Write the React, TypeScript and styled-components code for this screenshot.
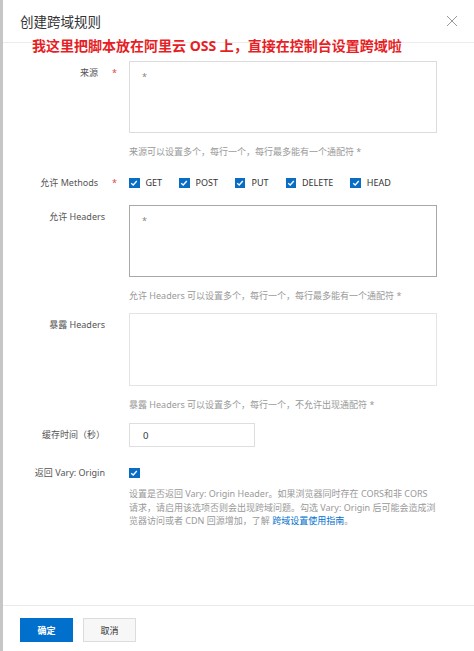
import React from "react";
import styled, { createGlobalStyle } from "styled-components";

const Global = createGlobalStyle`
  html, body { margin: 0; padding: 0; background: #fff; }
  body { font-family: "Noto Sans", "Noto Sans CJK SC", sans-serif; }
  * { box-sizing: border-box; }
`;

const Dialog = styled.div`
  position: relative;
  width: 474px;
  height: 651px;
  border-left: 3px solid #c6c6c6;
  display: flex;
  flex-direction: column;
  background: #fff;
  overflow: hidden;
`;

const Header = styled.div`
  height: 43px;
  flex: none;
  border-bottom: 1px solid #ececec;
  display: flex;
  align-items: flex-start;
  justify-content: space-between;
  padding: 12px 16px 0 17px;
`;

const Title = styled.div`
  font-size: 13.5px;
  line-height: 20px;
  color: #333;
`;

const Close = styled.button`
  border: none;
  background: none;
  padding: 0;
  margin-top: 3px;
  width: 12px;
  height: 12px;
  display: flex;
  cursor: pointer;
`;

const Annotation = styled.div`
  position: absolute;
  left: 29px;
  top: 36px;
  font-size: 14px;
  line-height: 20px;
  font-weight: 700;
  color: #e61e25;
  white-space: nowrap;
`;

const Body = styled.div`
  flex: 1;
  padding-top: 18px;
`;

const Item = styled.div<{ $mt?: number }>`
  display: grid;
  grid-template-columns: 126px 308px;
  margin-top: ${(p) => p.$mt ?? 0}px;
`;

const Label = styled.div<{ $lh?: number; $required?: boolean }>`
  position: relative;
  text-align: right;
  padding-right: ${(p) => (p.$required ? 31 : 24)}px;
  font-size: 9px;
  line-height: ${(p) => p.$lh ?? 24}px;
  color: #555;
  white-space: nowrap;
`;

const Star = styled.span`
  position: absolute;
  right: 12px;
  top: 0;
  color: #e0474c;
`;

const Control = styled.div`
  display: flex;
  flex-direction: column;
`;

const TextArea = styled.textarea<{ $border: string; $h: number }>`
  width: 308px;
  height: ${(p) => p.$h}px;
  border: 1px solid ${(p) => p.$border};
  resize: none;
  padding: 8px 12px;
  font-family: inherit;
  font-size: 9px;
  line-height: 13px;
  color: #888;
  outline: none;
`;

const Help = styled.div`
  margin-top: 12px;
  font-size: 9px;
  line-height: 14px;
  color: #999;
  white-space: nowrap;
`;

const Checks = styled.div`
  display: flex;
  align-items: center;
  gap: 17px;
  height: 14px;
`;

const CheckItem = styled.label`
  display: flex;
  align-items: center;
  gap: 6px;
  font-size: 9px;
  color: #333;
  line-height: 14px;
`;

const Box = styled.span`
  width: 10.5px;
  height: 10.5px;
  background: #0a6dc4;
  display: inline-flex;
  align-items: center;
  justify-content: center;
  flex: none;
`;

const Input = styled.input`
  width: 126px;
  height: 24px;
  border: 1px solid #dedede;
  padding: 0 13px;
  font-family: inherit;
  font-size: 9.5px;
  color: #333;
  outline: none;
`;

const Desc = styled.div`
  margin-top: 7px;
  width: 312px;
  font-size: 9px;
  line-height: 13.5px;
  color: #999;
`;

const Link = styled.a`
  color: #0070cc;
  text-decoration: none;
`;

const Footer = styled.div`
  flex: none;
  height: 46px;
  border-top: 1px solid #eaeaea;
  display: flex;
  align-items: flex-start;
  gap: 10px;
  padding: 12px 0 0 17px;
`;

const Button = styled.button<{ $primary?: boolean }>`
  width: 53px;
  height: 24px;
  font-family: inherit;
  font-size: 9px;
  border: 1px solid ${(p) => (p.$primary ? "#0070cc" : "#dcdcdc")};
  background: ${(p) => (p.$primary ? "#0070cc" : "#f7f7f7")};
  color: ${(p) => (p.$primary ? "#fff" : "#333")};
  font-weight: ${(p) => (p.$primary ? 700 : 400)};
  padding: 0;
  cursor: pointer;
`;

const Check = () => (
  <Box>
    <svg width="8" height="8" viewBox="0 0 8 8">
      <path d="M1.2 4.2 L3.2 6 L6.8 2" fill="none" stroke="#fff" strokeWidth="1.3" />
    </svg>
  </Box>
);

const methods = ["GET", "POST", "PUT", "DELETE", "HEAD"];

export default function App() {
  return (
    <>
      <Global />
      <Dialog>
        <Header>
          <Title>创建跨域规则</Title>
          <Close aria-label="关闭">
            <svg width="12" height="12" viewBox="0 0 12 12">
              <path d="M1 1 L11 11 M11 1 L1 11" stroke="#999" strokeWidth="1" fill="none" />
            </svg>
          </Close>
        </Header>
        <Annotation>我这里把脚本放在阿里云 OSS 上，直接在控制台设置跨域啦</Annotation>
        <Body>
          <Item>
            <Label $required>
              来源<Star>*</Star>
            </Label>
            <Control>
              <TextArea $border="#dcdcdc" $h={72} defaultValue="*" />
              <Help>来源可以设置多个，每行一个，每行最多能有一个通配符 *</Help>
            </Control>
          </Item>
          <Item $mt={17}>
            <Label $required $lh={14}>
              允许 Methods<Star>*</Star>
            </Label>
            <Checks>
              {methods.map((m) => (
                <CheckItem key={m}>
                  <Check />
                  {m}
                </CheckItem>
              ))}
            </Checks>
          </Item>
          <Item $mt={15}>
            <Label>允许 Headers</Label>
            <Control>
              <TextArea $border="#a8a8a8" $h={72} defaultValue="*" />
              <Help>允许 Headers 可以设置多个，每行一个，每行最多能有一个通配符 *</Help>
            </Control>
          </Item>
          <Item $mt={10}>
            <Label>暴露 Headers</Label>
            <Control>
              <TextArea $border="#e4e4e4" $h={73} defaultValue="" />
              <Help>暴露 Headers 可以设置多个，每行一个，不允许出现通配符 *</Help>
            </Control>
          </Item>
          <Item $mt={11}>
            <Label>缓存时间（秒）</Label>
            <Control>
              <Input defaultValue="0" />
            </Control>
          </Item>
          <Item $mt={19}>
            <Label $lh={14}>返回 Vary: Origin</Label>
            <Control>
              <Checks>
                <Check />
              </Checks>
              <Desc>
                设置是否返回 Vary: Origin Header。如果浏览器同时存在 CORS和非 CORS
                <br />
                请求，请启用该选项否则会出现跨域问题。勾选 Vary: Origin 后可能会造成浏
                <br />
                览器访问或者 CDN 回源增加，了解 <Link href="#">跨域设置使用指南</Link>。
              </Desc>
            </Control>
          </Item>
        </Body>
        <Footer>
          <Button $primary>确定</Button>
          <Button>取消</Button>
        </Footer>
      </Dialog>
    </>
  );
}
